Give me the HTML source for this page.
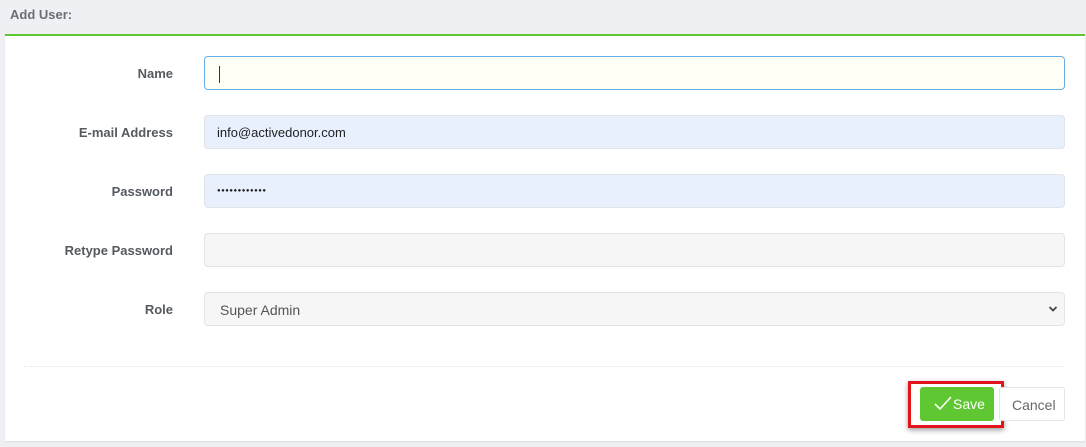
<!DOCTYPE html>
<html><head><style>
*{box-sizing:border-box;margin:0;padding:0}
body{width:1086px;height:447px;background:#eff0f4;font-family:"Liberation Sans",sans-serif;position:relative;overflow:hidden}
.title{position:absolute;left:10px;top:7px;font-size:13px;font-weight:bold;color:#6b6e75}
.panel{position:absolute;left:5px;top:34px;width:1080px;height:407px;background:#fff;border-top:2px solid #5fc732;box-shadow:0 1px 2px rgba(0,0,0,.08)}
.lbl{position:absolute;right:913px;font-size:13px;font-weight:bold;color:#555a61;text-align:right}
.inp{position:absolute;left:204px;width:861px;height:34px;border:1px solid #e3e4e8;border-radius:4px;background:#f6f6f6;font-size:13px;color:#222;padding:9px 12px}
.hr{position:absolute;left:24px;top:366px;width:1040px;border-top:1px dotted #e4e4e4}
</style></head><body>
<div class="title">Add User:</div>
<div class="panel"></div>
<div class="lbl" style="top:66px">Name</div>
<div class="inp" style="top:56px;background:#fffff5;border-color:#66afe9"><span style="display:inline-block;width:1px;height:17px;background:#333;margin-left:2px;vertical-align:middle"></span></div>
<div class="lbl" style="top:125px">E-mail Address</div>
<div class="inp" style="top:115px;background:#e8f0fe">info@activedonor.com</div>
<div class="lbl" style="top:184px">Password</div>
<div class="inp" style="top:174px;background:#e8f0fe;font-size:6px;letter-spacing:0.5px;padding-top:13px">●●●●●●●●●●●●</div>
<div class="lbl" style="top:243px">Retype Password</div>
<div class="inp" style="top:233px"></div>
<div class="lbl" style="top:302px">Role</div>
<div class="inp" style="top:292px;color:#555;font-size:14px;padding-top:9px;padding-left:15px">Super Admin
<svg style="position:absolute;right:6px;top:12px" width="10" height="8" viewBox="0 0 10 8"><path d="M1.5 2l3.5 3.5L8.5 2" stroke="#444" stroke-width="1.8" fill="none"/></svg></div>
<div class="hr"></div>
<div style="position:absolute;left:908px;top:381px;width:96px;height:47px;border:3px solid #e0141a;box-shadow:0 2px 5px rgba(0,0,0,.4)"></div>
<div style="position:absolute;left:920px;top:387px;width:74px;height:34px;background:#5fc732;border-radius:3px;color:#fff;font-size:14px;padding:9px 0 0 14px">
<svg style="position:absolute;left:14px;top:9px" width="18" height="15" viewBox="0 0 18 15"><path d="M1 8l5 5L17 1" stroke="#fff" stroke-width="1.6" fill="none"/></svg><span style="margin-left:19px">Save</span></div>
<div style="position:absolute;left:999px;top:387px;width:66px;height:34px;border:1px solid #e5e5e5;border-radius:3px;color:#666;font-size:14px;padding:9px 0 0 12px;background:#fff">Cancel</div>
</body></html>
